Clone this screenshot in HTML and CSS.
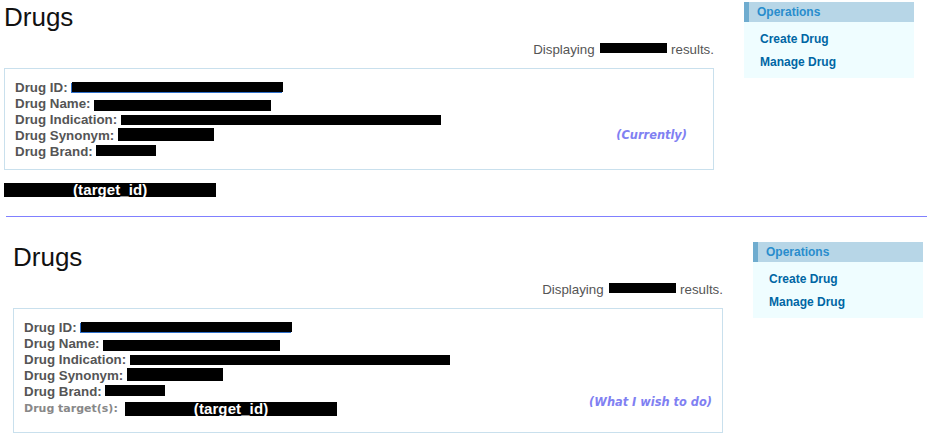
FILE: index.html
```html
<!DOCTYPE html>
<html>
<head>
<meta charset="utf-8">
<title>Drugs</title>
<link rel="stylesheet" href="styles.css">
</head>
<body>
<div class="page page-current">
  <div class="main">
    <h1 class="title">Drugs</h1>
    <div class="summary">Displaying <span class="rd rd-count"></span> results.</div>
    <div class="view">
      <div class="row"><b>Drug ID:</b> <a class="rd rd-id" href="#"></a></div>
      <div class="row"><b>Drug Name:</b> <span class="rd rd-name"></span></div>
      <div class="row"><b>Drug Indication:</b> <span class="rd rd-ind"></span></div>
      <div class="row"><b>Drug Synonym:</b> <span class="rd rd-syn"></span></div>
      <div class="row"><b>Drug Brand:</b> <span class="rd rd-brand"></span></div>
      <span class="note note-current">(Currently)</span>
    </div>
    <div class="target-bar target-bar-below">(target_id)</div>
  </div>
  <div class="sidebar">
    <div class="portlet">
      <div class="portlet-decoration"><div class="portlet-title">Operations</div></div>
      <div class="portlet-content">
        <ul class="operations">
          <li><a href="#">Create Drug</a></li>
          <li><a href="#">Manage Drug</a></li>
        </ul>
      </div>
    </div>
  </div>
</div>
<div class="separator"></div>
<div class="page page-wish">
  <div class="main">
    <h1 class="title">Drugs</h1>
    <div class="summary">Displaying <span class="rd rd-count"></span> results.</div>
    <div class="view">
      <div class="row"><b>Drug ID:</b> <a class="rd rd-id" href="#"></a></div>
      <div class="row"><b>Drug Name:</b> <span class="rd rd-name"></span></div>
      <div class="row"><b>Drug Indication:</b> <span class="rd rd-ind"></span></div>
      <div class="row"><b>Drug Synonym:</b> <span class="rd rd-syn"></span></div>
      <div class="row"><b>Drug Brand:</b> <span class="rd rd-brand"></span></div>
      <div class="row-target">
        <span class="target-label">Drug target(s):</span>
        <span class="target-bar target-bar-inline">(target_id)</span>
      </div>
      <span class="note note-wish">(What I wish to do)</span>
    </div>
  </div>
  <div class="sidebar">
    <div class="portlet">
      <div class="portlet-decoration"><div class="portlet-title">Operations</div></div>
      <div class="portlet-content">
        <ul class="operations">
          <li><a href="#">Create Drug</a></li>
          <li><a href="#">Manage Drug</a></li>
        </ul>
      </div>
    </div>
  </div>
</div>
</body>
</html>
```
FILE: styles.css
```css
html, body {
  margin: 0;
  padding: 0;
  background: #fff;
}
body {
  font-family: "Liberation Sans", Arial, Helvetica, sans-serif;
  font-size: 13.33px;
  line-height: 16px;
  color: #555;
  overflow: hidden;
}
.page {
  display: flex;
  align-items: flex-start;
  gap: 30px;
}
.page-current {
  padding-top: 2px;
  margin-left: 4px;
}
.page-wish {
  padding-top: 25px;
  margin-left: 13px;
}
.main {
  width: 710px;
  flex: none;
}
.title {
  margin: 0;
  font-size: 26px;
  line-height: 30px;
  font-weight: normal;
  color: #111;
}
.summary {
  margin-top: 10px;
  text-align: right;
  line-height: 16px;
}
.view {
  position: relative;
  margin-top: 10px;
  border: 1px solid #c9e0ed;
  padding: 11px 10px 9px;
}
.row {
  height: 16px;
  line-height: 16px;
  white-space: nowrap;
}
.row b {
  font-weight: bold;
}
.rd {
  display: inline-block;
  background: #000;
}
.rd-count { width: 67px; height: 10px; vertical-align: 1px; margin-left: 2px; }
.rd-id { width: 211px; height: 10px; vertical-align: 0; box-shadow: -1px 1px 0 #2e6fcb; margin-left: 1px; }
.rd-name { width: 177px; height: 11px; vertical-align: -3px; }
.rd-ind { width: 320px; height: 10px; vertical-align: -1px; }
.rd-syn { width: 96px; height: 13px; vertical-align: -1px; }
.rd-brand { width: 60px; height: 11px; vertical-align: 0; }

.row-target {
  display: flex;
  align-items: flex-start;
  height: 23px;
}
.target-label {
  margin-top: 2px;
  font-family: "DejaVu Sans", Verdana, sans-serif;
  font-weight: bold;
  font-size: 11px;
  line-height: 14px;
  color: #888;
}
.target-bar {
  display: block;
  box-sizing: border-box;
  width: 212px;
  height: 14px;
  padding-left: 69px;
  background: #000;
  color: #fff;
  font-family: "Liberation Sans", Arial, sans-serif;
  font-weight: bold;
  font-size: 15px;
  line-height: 14px;
  letter-spacing: 0.1px;
  white-space: nowrap;
}
.target-bar-below {
  margin-top: 13px;
}
.target-bar-inline {
  margin: 2px 0 0 7px;
}
.note {
  position: absolute;
  font-family: "DejaVu Sans", Verdana, sans-serif;
  font-style: italic;
  font-weight: bold;
  font-size: 11.4px;
  line-height: 14px;
  color: #8080f2;
  white-space: nowrap;
}
.note-current { top: 59px; right: 26px; }
.note-wish { top: 86px; right: 10px; }

.separator {
  margin: 19px 0 0 6px;
  height: 1px;
  background: #8080ff;
}

.sidebar {
  width: 170px;
  flex: none;
}
.portlet-decoration {
  padding: 3px 8px;
  background: #b7d6e7;
  border-left: 5px solid #6faccf;
}
.portlet-title {
  font-size: 12px;
  line-height: 14px;
  font-weight: bold;
  color: #298dcd;
}
.portlet-content {
  padding: 5px 8px;
  background: #effdff;
}
.operations {
  list-style: none;
  margin: 0;
  padding: 0;
}
.operations li {
  padding: 3px 0 1px;
}
.operations a {
  display: block;
  padding: 2px 0 2px 8px;
  font-size: 12px;
  line-height: 15px;
  font-weight: bold;
  color: #0066a4;
  text-decoration: none;
}
```
